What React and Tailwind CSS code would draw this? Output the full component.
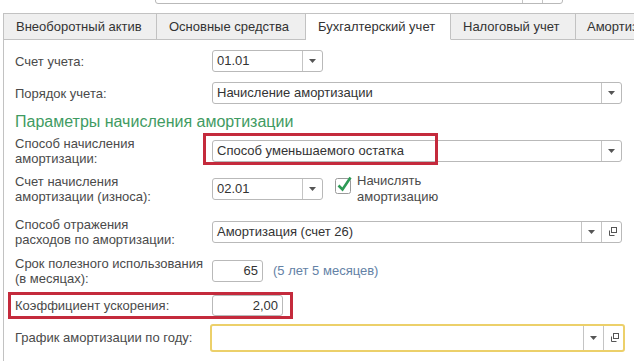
import React from "react";

const Arrow = () => (
  <svg width="7" height="4" viewBox="0 0 7 4">
    <path d="M0 0 H7 L3.5 4 Z" fill="#555" />
  </svg>
);

const OpenIcon = () => (
  <svg width="12" height="12" viewBox="0 0 12 12" fill="none" stroke="#555" strokeWidth="1">
    <rect x="5.5" y="1.5" width="5" height="5" />
    <path d="M3.5 4.5 V9.5 H8.5" />
  </svg>
);

const Field = ({ className, value, right, dd, open }) => (
  <div className={`flex items-stretch rounded-[3px] bg-white ${className}`}>
    <div className={`flex-1 flex items-center px-[4px] text-[13px] text-[#333] whitespace-nowrap overflow-hidden ${right ? "justify-end" : ""}`}>
      {value}
    </div>
    {dd && (
      <div className="w-[20px] border-l border-[#c4c4c4] flex items-center justify-center">
        <Arrow />
      </div>
    )}
    {open && (
      <div className="w-[20px] border-l border-[#c4c4c4] flex items-center justify-center">
        <OpenIcon />
      </div>
    )}
  </div>
);

const Label = ({ children }) => (
  <div className="w-[197px] shrink-0 text-[13px] leading-[15px] text-[#4a4a4a]">{children}</div>
);

const Tab = ({ children, active, className }) => (
  <div
    className={`h-[27px] shrink-0 flex items-center border-t border-l border-r border-[#c2c2c2] text-[13px] text-[#333] whitespace-nowrap ${
      active ? "bg-white border-b border-b-white" : "bg-[#efefef] border-b"
    } ${className}`}
  >
    {children}
  </div>
);

export default function App() {
  return (
    <div
      className="w-[634px] h-[361px] overflow-hidden bg-white"
      style={{ fontFamily: '"Liberation Sans", Arial, sans-serif' }}
    >
      {/* bottom edge of a field above */}
      <div className="h-[13px] overflow-hidden">
        <div className="ml-[155px] mt-[-20px] w-[408px] h-[24px] flex border border-[#b9b9b9] rounded-[3px]">
          <div className="flex-1" />
          <div className="w-[20px] border-l border-[#c4c4c4]" />
          <div className="w-[20px] border-l border-[#c4c4c4]" />
        </div>
      </div>

      {/* tabs */}
      <div className="flex pl-[3px] w-[700px]">
        <Tab className="w-[154px] pl-[12px]">Внеоборотный актив</Tab>
        <Tab className="w-[149px] pl-[12px] border-l-0">Основные средства</Tab>
        <Tab active className="w-[145px] pl-[12px] border-l-0">Бухгалтерский учет</Tab>
        <Tab className="w-[125px] pl-[12px] border-l-0">Налоговый учет</Tab>
        <Tab className="w-[120px] pl-[11px] border-l-0">Амортизация</Tab>
      </div>

      {/* panel */}
      <div className="ml-[3px] h-[321px] border-l border-[#c2c2c2] flex flex-col">
        <div className="mt-[10px] h-[22px] flex items-center pl-[11px]">
          <Label>Счет учета:</Label>
          <Field className="w-[111px] h-[22px] border border-[#b9b9b9]" value="01.01" dd />
        </div>

        <div className="mt-[10px] h-[22px] flex items-center pl-[11px]">
          <Label>Порядок учета:</Label>
          <Field className="w-[410px] h-[22px] border border-[#b9b9b9]" value="Начисление амортизации" dd />
        </div>

        <div className="mt-[9px] h-[18px] flex items-center pl-[11px] text-[16px] text-[#3f9b62] whitespace-nowrap">
          Параметры начисления амортизации
        </div>

        <div className="mt-[9px] h-[22px] flex items-center pl-[11px] relative">
          <Label>
            Способ начисления
            <br />
            амортизации:
          </Label>
          <Field className="w-[410px] h-[22px] border border-[#b9b9b9]" value="Способ уменьшаемого остатка" dd />
          <div className="absolute left-[199px] top-[-7px] w-[235px] h-[32px] border-[3px] border-[#c42a3c] pointer-events-none" />
        </div>

        <div className="mt-[16px] h-[22px] flex items-center pl-[11px]">
          <Label>
            Счет начисления
            <br />
            амортизации (износа):
          </Label>
          <Field className="w-[111px] h-[22px] border border-[#b9b9b9]" value="02.01" dd />
          <div className="ml-[12px] flex items-start">
            <svg width="18" height="20" viewBox="0 0 18 20" className="mt-[1px]">
              <rect x="0.5" y="4.5" width="15" height="15" rx="2" fill="#fff" stroke="#9a9a9a" />
              <path d="M3.5 11.5 L7.5 15.5 L15.5 3.5" fill="none" stroke="#2d9a55" strokeWidth="2.6" />
            </svg>
            <div className="ml-[4px] text-[13px] leading-[16px] text-[#4a4a4a]">
              Начислять
              <br />
              амортизацию
            </div>
          </div>
        </div>

        <div className="mt-[21px] h-[22px] flex items-center pl-[11px]">
          <Label>
            Способ отражения
            <br />
            расходов по амортизации:
          </Label>
          <Field className="w-[410px] h-[22px] border border-[#b9b9b9]" value="Амортизация (счет 26)" dd open />
        </div>

        <div className="mt-[17px] h-[22px] flex items-center pl-[11px]">
          <Label>
            Срок полезного использования
            <br />
            (в месяцах):
          </Label>
          <Field className="w-[51px] h-[22px] border border-[#b9b9b9]" value="65" right />
          <div className="ml-[10px] text-[13px] text-[#6482a6] whitespace-nowrap">(5 лет 5 месяцев)</div>
        </div>

        <div className="mt-[10px] ml-[4px] w-[285px] h-[27px] border-[3px] border-[#c42a3c] flex items-center pl-[4px]">
          <Label>Коэффициент ускорения:</Label>
          <Field className="w-[71px] h-[21px] border border-[#b9b9b9]" value="2,00" right />
        </div>

        <div className="mt-[5px] h-[28px] flex items-center pl-[11px]">
          <div className="w-[195px] shrink-0 text-[13px] text-[#4a4a4a] whitespace-nowrap">График амортизации по году:</div>
          <Field className="w-[415px] h-[28px] border-2 border-[#ecd06a]" value="" dd open />
        </div>
      </div>
    </div>
  );
}
